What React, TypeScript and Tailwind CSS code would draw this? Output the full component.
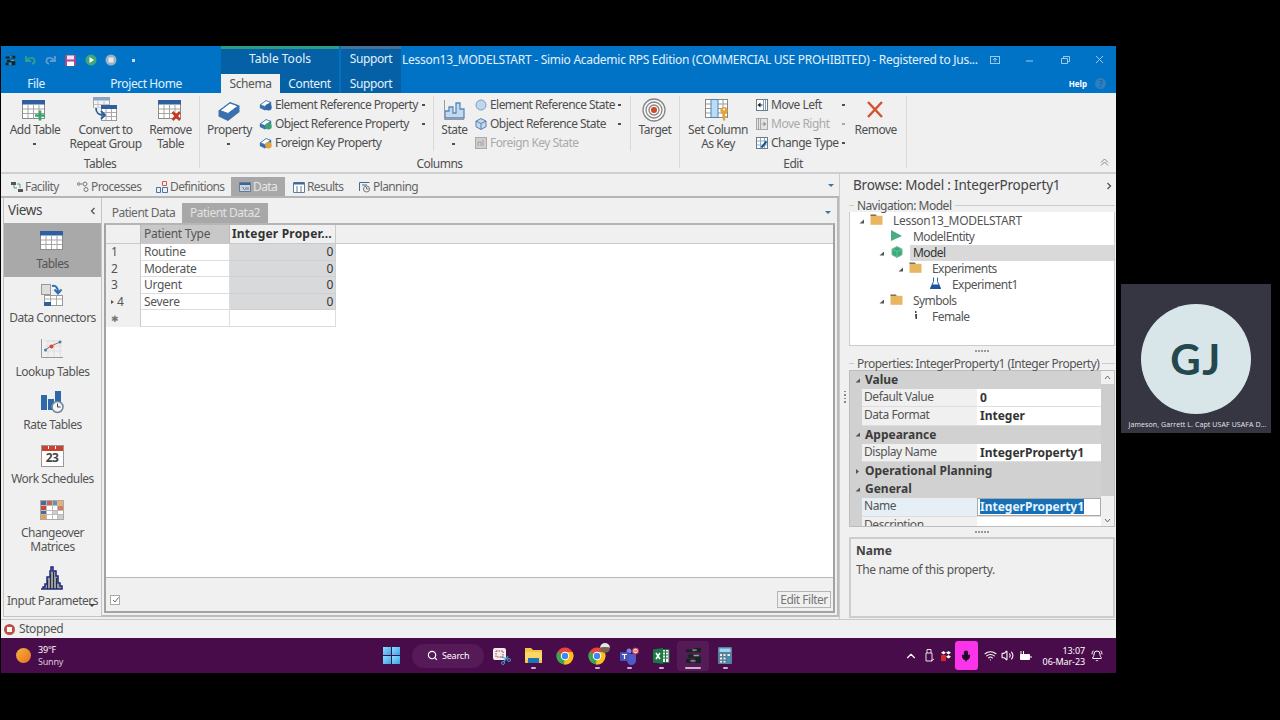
import type { ReactNode } from 'react';
import clsx from 'clsx';
import { Search, Wifi, Volume2, ChevronUp, Mic, BellRing } from 'lucide-react';

/* ---------- icons ---------- */

type GridIconProps = { badge?: 'plus' | 'cross' | 'none' };

function TableIcon({ badge = 'none' }: GridIconProps) {
  return (
    <svg width="24" height="22" viewBox="0 0 24 22">
      <rect x="0.5" y="1.5" width="22" height="18" fill="#fff" stroke="#8b8b8b" />
      <rect x="0" y="1" width="23" height="4.5" fill="#2f5f9e" />
      <path d="M6 6v13M11.5 6v13M17 6v13M1 10h21M1 14.5h21" stroke="#a5a5a5" fill="none" />
      {badge === 'plus' && <path d="M18 11.5v10M13 16.5h10" stroke="#35a66b" strokeWidth="2.6" />}
      {badge === 'cross' && <path d="M14.5 13l7.5 8M22 13l-7.5 8" stroke="#c8391f" strokeWidth="2.6" />}
    </svg>
  );
}

function ConvertIcon() {
  return (
    <svg width="26" height="25" viewBox="0 0 26 25">
      <rect x="1.5" y="0.5" width="16" height="14" fill="#f4f4f4" stroke="#aaa" />
      <rect x="1" y="0" width="17" height="3.5" fill="#8ba4c6" />
      <path d="M6 4v10M12 4v10M2 7.5h15M2 11h15" stroke="#c0c0c0" />
      <rect x="9.5" y="8.5" width="15" height="15" fill="#fff" stroke="#999" />
      <rect x="9" y="8" width="16" height="4" fill="#2f5f9e" />
      <path d="M14 12v11M19.5 12v11M10 15.5h14M10 19.5h14" stroke="#aaa" />
      <path d="M1 11h8v13H1z" fill="#f0f0f0" />
      <path d="M4 11c0 5 2 7 8 7M9 14l4 4-4 4" stroke="#2f5f9e" strokeWidth="1.8" fill="none" />
    </svg>
  );
}

function PropertyIcon({ size = 24, badge }: { size?: number; badge?: string }) {
  return (
    <svg width={size} height={size} viewBox="0 0 24 24" className="shrink-0">
      <path d="M1.5 12.500L13 4l9.500 3.500v6.500L11 23l-9.500-4.500z" fill="#3a70ad" />
      <path d="M3 12.500L13 5l8 3-10 7.500z" fill="#fff" stroke="#3a70ad" />
      {badge && <circle cx="17.5" cy="17" r="6" fill={badge} />}
    </svg>
  );
}

function StateIcon() {
  return (
    <svg width="22" height="22" viewBox="0 0 22 22">
      <path d="M2 19V12h4V8h4v6h3V4h4v6h4v9z" fill="#c3d9ee" stroke="#5a88b8" strokeWidth="1.3" />
      <path d="M1.500 1v19.500H21" stroke="#999" fill="none" />
    </svg>
  );
}

function TargetIcon() {
  return (
    <svg width="24" height="24" viewBox="0 0 24 24" fill="none" stroke="#858585" strokeWidth="1.3">
      <circle cx="12" cy="12" r="11" fill="#fafafa" />
      <circle cx="12" cy="12" r="8" />
      <circle cx="12" cy="12" r="5" />
      <circle cx="12" cy="12" r="2.400" fill="#d04a2c" stroke="#d04a2c" />
    </svg>
  );
}

function KeyColumnIcon() {
  return (
    <svg width="24" height="23" viewBox="0 0 24 23">
      <rect x="0.5" y="1.5" width="22" height="18" fill="#fff" stroke="#888" />
      <path d="M1 6h21M1 10.500h21M1 15h21M18 2v17" stroke="#999" />
      <rect x="6" y="1.5" width="7" height="18" fill="#bcdcf3" stroke="#4b87b9" />
      <circle cx="19" cy="12.500" r="3.600" fill="#e0a43a" />
      <circle cx="19" cy="11.500" r="1" fill="#fff" />
      <path d="M19 15v7.500M19 19h3" stroke="#e0a43a" strokeWidth="2.200" />
    </svg>
  );
}

function CrossIcon() {
  return (
    <svg width="18" height="18" viewBox="0 0 18 18">
      <path d="M2 1l14 15M16 1L2 16" stroke="#d4532f" strokeWidth="2.500" />
    </svg>
  );
}

function ColumnIcon({ kind }: { kind: 'left' | 'right' | 'type' }) {
  const ink = kind === 'right' ? '#a8a8a8' : '#6b7b88';
  return (
    <svg width="12" height="12" viewBox="0 0 12 12" fill="none" stroke={ink} className="shrink-0">
      <rect x="0.5" y="0.5" width="11" height="11" fill={kind === 'right' ? '#e4e4e4' : '#fff'} />
      {kind === 'left' && (
        <>
          <path d="M7.500 1v10M9.500 1v10" stroke="#7d9cb8" />
          <path d="M1.500 6L4.500 3.500v5z" fill="#222" stroke="none" />
          <path d="M4 6h2.500" stroke="#222" />
        </>
      )}
      {kind === 'right' && (
        <>
          <path d="M2.500 1v10M4.500 1v10M5.500 6h2" />
          <path d="M10.500 6L7.500 3.500v5z" fill="#999" stroke="none" />
        </>
      )}
      {kind === 'type' && (
        <>
          <path d="M4.500 1v10M8.500 1v10M1 4h10M1 8h10" stroke="#7fb0d4" />
          <path d="M5.500 10.500l5-6" stroke="#234f80" strokeWidth="2" />
        </>
      )}
    </svg>
  );
}

function CircleStateIcon() {
  return (
    <svg width="12" height="12" viewBox="0 0 12 12" className="shrink-0">
      <circle cx="6" cy="6" r="5" fill="#bdd7ee" stroke="#7f9dbd" />
    </svg>
  );
}

function CubeIcon({ fill, stroke }: { fill: string; stroke: string }) {
  return (
    <svg width="12" height="12" viewBox="0 0 12 12" fill={fill} stroke={stroke} className="shrink-0">
      <path d="M6 .6l5 2.400v5.800L6 11.400 1 8.800V3z" />
      <path d="M1 3l5 2.500L11 3M6 5.500v6" fill="none" />
    </svg>
  );
}

function DisabledKeyIcon() {
  return (
    <svg width="12" height="12" viewBox="0 0 12 12" className="shrink-0">
      <rect x="0.5" y="0.5" width="11" height="11" fill="#cfcfcf" stroke="#aaa" />
      <path d="M3 9V5h3v4M8 3v6" stroke="#a0a0a0" fill="none" />
    </svg>
  );
}

function ConnectorIcon() {
  return (
    <svg width="24" height="24" viewBox="0 0 24 24">
      <rect x="1.5" y="1.5" width="9" height="10" fill="#ddd" stroke="#999" />
      <rect x="4.5" y="12.5" width="18" height="10" fill="#fff" stroke="#999" />
      <path d="M10.500 13v9M16.500 13v9M5 16h17" stroke="#aaa" />
      <rect x="4" y="19" width="7" height="4" fill="#2f5f9e" />
      <path d="M12 3c4-1 6 2 6 6M14.500 6.500l3.500 4 3.500-4" stroke="#2f6fae" strokeWidth="2" fill="none" />
    </svg>
  );
}

function LookupIcon() {
  return (
    <svg width="24" height="22" viewBox="0 0 24 22">
      <path d="M5 3h17M5 8h17M5 13h17M8 2v17M14 2v17M20 2v17" stroke="#ddd" />
      <path d="M1.500 1v18.500H23" stroke="#999" fill="none" />
      <path d="M5 12l6-4 9-4" stroke="#c55" fill="none" />
      <circle cx="5.500" cy="12" r="1.500" fill="#3a82a8" />
      <circle cx="11.500" cy="8.500" r="2" fill="#cf4a34" />
      <circle cx="20" cy="4" r="1.500" fill="#3a82a8" />
    </svg>
  );
}

function RateIcon() {
  return (
    <svg width="24" height="24" viewBox="0 0 24 24">
      <path d="M1 5h6v15H1zM8 9h6v11H8zM15 1h6v14h-6z" fill="#2f68a8" />
      <circle cx="17.500" cy="17" r="5.500" fill="#f4f4f4" stroke="#708495" strokeWidth="1.500" />
      <path d="M17.500 13.500V17h3" stroke="#345" fill="none" />
    </svg>
  );
}

function CalendarIcon() {
  return (
    <div className="flex h-[22px] w-[23px] flex-col border border-[#999] bg-white">
      <div className="flex h-[5px] shrink-0 justify-around bg-[#c9422f] px-1">
        <span className="h-[3px] w-px bg-white" />
        <span className="h-[3px] w-px bg-white" />
      </div>
      <div className="text-center text-[12px] leading-[14px] font-bold text-[#444]">23</div>
    </div>
  );
}

const MATRIX = [
  ['#4a6a98', '#c9654a', '#6d8fb5', '#e8b06a'],
  ['#c94a3a', '#ffffff', '#ffffff', '#d8785a'],
  ['#4a6a98', '#ffffff', '#cccccc', '#ffffff'],
  ['#e8a050', '#ffffff', '#ffffff', '#cccccc'],
];

function MatrixIcon() {
  return (
    <div className="grid h-[20px] w-[24px] grid-cols-4 gap-px border border-[#aaa] bg-[#bbb]">
      {MATRIX.flat().map((color, i) => (
        <span key={i} style={{ backgroundColor: color }} />
      ))}
    </div>
  );
}

function HistogramIcon() {
  return (
    <svg width="24" height="24" viewBox="0 0 24 24">
      <path
        d="M1 23h2v-2h2v-3h2v-7h3V5h1V1h2v4h3v5h2v7h2v3h2v3z"
        fill="#9a9c98"
        stroke="#1c2a7c"
        strokeWidth="1.500"
      />
      <path d="M7.500 14v9M10.500 8v15M13.500 6v17M16.500 12v11" stroke="#222b55" />
    </svg>
  );
}

function FolderIcon() {
  return (
    <svg width="13" height="11" viewBox="0 0 13 11">
      <path d="M.5 2V.5h5L7 2z" fill="#6f6040" />
      <rect x="0.5" y="1.8" width="12" height="9" fill="#e8b660" />
    </svg>
  );
}

function FlaskIcon() {
  return (
    <svg width="13" height="13" viewBox="0 0 13 13">
      <path d="M4.500 .5v4L1.500 11.500h10L8.500 4.500v-4" stroke="#2862a2" fill="none" />
      <path d="M3 7.500h7l2 4.500H1z" fill="#1d559a" />
    </svg>
  );
}

/* ---------- title bar ---------- */

function SimioMark({ className }: { className?: string }) {
  return (
    <svg className={className} viewBox="0 0 16 16">
      <path d="M1 2h6v3H1zM9 1h6v4H9zM3 7h6v3H3zM9 9h6v6H9zM1 11h5v4H1z" fill="#15241f" />
      <path d="M7 3h4M8 8h5M5 13h5" stroke="#7fae8f" strokeWidth="1.200" />
    </svg>
  );
}

function QuickAccess() {
  return (
    <div className="flex h-[28px] items-center pl-[4px]">
      <SimioMark className="mr-[8px] h-[11px] w-[11px]" />
      <svg className="mr-[7px]" width="13" height="12" viewBox="0 0 13 12" fill="none" stroke="#31a08e" strokeWidth="1.800">
        <path d="M2 2v5h5M2.500 6.500C5 3 10 3 10.500 6c.4 2-1 3.500-2.500 4" />
      </svg>
      <svg className="mr-[8px]" width="13" height="12" viewBox="0 0 13 12" fill="none" stroke="#5f9ccb" strokeWidth="1.800">
        <path d="M11 2v5H6M10.500 6.500C8 3 3 3 2.500 6c-.4 2 1 3.500 2.500 4" />
      </svg>
      <svg className="mr-[9px]" width="11" height="11" viewBox="0 0 11 11">
        <rect width="11" height="11" fill="#a24a94" />
        <rect x="2" y="0.5" width="7" height="4" fill="#f3e4f2" />
        <rect x="2" y="6.5" width="7" height="4.5" fill="#fff" />
      </svg>
      <svg className="mr-[8px]" width="12" height="12" viewBox="0 0 12 12">
        <circle cx="6" cy="6" r="5.500" fill="#3fa878" />
        <path d="M4.500 3l4.500 3-4.500 3z" fill="#fff" />
      </svg>
      <svg className="mr-[15px]" width="12" height="12" viewBox="0 0 12 12">
        <circle cx="6" cy="6" r="5.500" fill="#9fb0c0" />
        <rect x="3.5" y="3.5" width="5" height="5" fill="#e4e9ee" />
      </svg>
      <span className="h-[3px] w-[3px] bg-[#bfe0f8]" />
    </div>
  );
}

function TitleBar() {
  return (
    <header className="flex h-[47px] bg-[#0173c7] text-[12px] tracking-[-0.4px] text-[#e3f1fb]">
      <div className="w-[220px]">
        <QuickAccess />
        <div className="flex h-[19px] items-center whitespace-nowrap">
          <span className="w-[70px] text-center">File</span>
          <span className="w-[150px] text-center">Project Home</span>
        </div>
      </div>
      <div className="w-[118px] border-t-[3px] border-[#2c9c83] bg-[#0560a6]">
        <div className="flex h-[25px] items-center justify-center pb-[5px] tracking-normal">Table Tools</div>
        <div className="flex h-[19px] items-center text-center">
          <span className="h-[19px] w-[59px] bg-[#f0f0f0] leading-[20px] text-[#555]">Schema</span>
          <span className="w-[59px]">Content</span>
        </div>
      </div>
      <div className="ml-[2px] w-[60px] border-t-[3px] border-[#44729c] bg-[#0560a6] text-center">
        <div className="flex h-[25px] items-center justify-center pb-[5px]">Support</div>
        <div className="h-[19px] leading-[20px]">Support</div>
      </div>
      <div className="flex-1">
        <div className="flex h-[28px] items-center pl-[1px]">
          <span className="w-[586px] shrink-0 tracking-[-0.27px] whitespace-nowrap">
            Lesson13_MODELSTART - Simio Academic RPS Edition (COMMERCIAL USE PROHIBITED) - Registered to Jus...
          </span>
          <svg width="118" height="12" viewBox="0 0 118 12" fill="none" stroke="#9dcaec">
            <rect x="2.5" y="2.5" width="9" height="7" />
            <path d="M7 8V4.500M5 6l2-2 2 2M38 7h7" />
            <path d="M73.500 4.500h6v5h-6zM75.500 4V2.500h6v5H80M108 2l7 7M115 2l-7 7" />
          </svg>
        </div>
        <div className="flex h-[19px] items-center justify-end gap-[8px] pr-[10px]">
          <span className="text-[8px] font-bold tracking-normal text-white">Help</span>
          <span className="flex h-[11px] w-[11px] items-center justify-center rounded-full bg-[#2c80bd] text-[8px] leading-none text-[#0b5c9f]">
            ?
          </span>
        </div>
      </div>
    </header>
  );
}

/* ---------- ribbon ---------- */

function Caret({ className }: { className?: string }) {
  return <span className={clsx('inline-block h-[2px] w-[3px] shrink-0 bg-current', className)} />;
}

type BigButtonProps = { icon: ReactNode; lines: string[]; className: string; menu?: boolean };

function BigButton({ icon, lines, className, menu }: BigButtonProps) {
  return (
    <div className={clsx('flex shrink-0 flex-col items-center pt-[3px]', className)}>
      <div className="flex h-[27px] items-center pr-[2px]">{icon}</div>
      {lines.map((line) => (
        <span key={line} className="leading-[14px] whitespace-nowrap">
          {line}
        </span>
      ))}
      {menu ? <Caret className="mt-[6px] mr-[2px]" /> : null}
    </div>
  );
}

type SmallButtonProps = { icon: ReactNode; label: string; menu?: boolean; disabled?: boolean };

function SmallButton({ icon, label, menu, disabled }: SmallButtonProps) {
  return (
    <div className={clsx('flex h-[19px] items-center gap-[3px]', disabled && 'text-[#aaa]')}>
      {icon}
      <span className="min-w-0 flex-1 whitespace-nowrap">{label}</span>
      {menu ? <Caret /> : null}
    </div>
  );
}

function Separator({ className }: { className: string }) {
  return <div className={clsx('w-px shrink-0 bg-[#dadada]', className)} />;
}

function Ribbon() {
  return (
    <div className="flex h-[81px] border-b-2 border-[#cfcfcf] bg-[#f0f0f0] text-[12px] tracking-[-0.5px] text-[#4f4f4f]">
      <section className="w-[198px]">
        <div className="flex h-[63px]">
          <BigButton className="w-[68px]" icon={<TableIcon badge="plus" />} lines={['Add Table']} menu />
          <BigButton className="w-[73px]" icon={<ConvertIcon />} lines={['Convert to', 'Repeat Group']} />
          <BigButton className="w-[57px]" icon={<TableIcon badge="cross" />} lines={['Remove', 'Table']} />
        </div>
        <div className="text-center leading-[15px]">Tables</div>
      </section>
      <Separator className="mt-[3px] h-[72px]" />

      <section className="w-[479px]">
        <div className="flex h-[63px]">
          <BigButton className="w-[59px]" icon={<PropertyIcon />} lines={['Property']} menu />
          <div className="w-[166px] pt-[2px] tracking-[-0.58px]">
            <SmallButton icon={<PropertyIcon size={13} badge="#2f68a8" />} label="Element Reference Property" menu />
            <SmallButton icon={<PropertyIcon size={13} badge="#3aa270" />} label="Object Reference Property" menu />
            <SmallButton icon={<PropertyIcon size={13} badge="#e0a43a" />} label="Foreign Key Property" />
          </div>
          <Separator className="mt-[3px] ml-[8px] h-[55px]" />
          <BigButton className="w-[41px]" icon={<StateIcon />} lines={['State']} menu />
          <div className="w-[146px] pt-[2px] tracking-[-0.56px]">
            <SmallButton icon={<CircleStateIcon />} label="Element Reference State" menu />
            <SmallButton icon={<CubeIcon fill="#c3d9ee" stroke="#5a7fae" />} label="Object Reference State" menu />
            <SmallButton icon={<DisabledKeyIcon />} label="Foreign Key State" disabled />
          </div>
          <Separator className="mt-[3px] ml-[9px] h-[55px]" />
          <BigButton className="w-[48px]" icon={<TargetIcon />} lines={['Target']} />
        </div>
        <div className="text-center leading-[15px]">Columns</div>
      </section>
      <Separator className="mt-[3px] h-[72px]" />

      <section className="w-[226px]">
        <div className="flex h-[63px]">
          <BigButton className="w-[76px]" icon={<KeyColumnIcon />} lines={['Set Column', 'As Key']} />
          <div className="w-[90px] pt-[2px]">
            <SmallButton icon={<ColumnIcon kind="left" />} label="Move Left" menu />
            <SmallButton icon={<ColumnIcon kind="right" />} label="Move Right" menu disabled />
            <SmallButton icon={<ColumnIcon kind="type" />} label="Change Type" menu />
          </div>
          <BigButton className="w-[62px]" icon={<CrossIcon />} lines={['Remove']} />
        </div>
        <div className="text-center leading-[15px]">Edit</div>
      </section>
      <Separator className="mt-[3px] h-[72px]" />
      <div className="flex flex-1 items-end justify-end pr-[7px] pb-[5px]">
        <svg width="9" height="9" viewBox="0 0 9 9" fill="none" stroke="#888">
          <path d="M1 4.500L4.500 1 8 4.500M1 7.500L4.500 4 8 7.500" />
        </svg>
      </div>
    </div>
  );
}

/* ---------- workspace ---------- */

function TabGlyph({ kind }: { kind: string }) {
  return (
    <svg width="12" height="12" viewBox="0 0 12 12" fill="none" stroke="#777" className="shrink-0">
      {kind === 'facility' && (
        <>
          <path d="M0 1h5v3H0zM7 8h5v3H7z" fill="#555" stroke="none" />
          <path d="M3 4v3h3M6 3h3v4" stroke="#50a080" />
        </>
      )}
      {kind === 'processes' && (
        <>
          <circle cx="1.800" cy="3" r="1.300" />
          <path d="M3.500 3h2" />
          <circle cx="8" cy="3" r="2" />
          <circle cx="9" cy="8.500" r="2" />
        </>
      )}
      {kind === 'definitions' && (
        <>
          <path d="M.5 6.500h4v5h-4z" stroke="#4676a8" />
          <path d="M6.500.5h4v4h-4z" stroke="#d0603f" />
          <path d="M6.500 6.500h5v5h-5z" stroke="#4676a8" />
        </>
      )}
      {kind === 'data' && (
        <>
          <path d="M.5 1.500h11v9H.5z" fill="#ccd3dc" stroke="#5f7ba0" />
          <path d="M1 3h10" stroke="#3c659a" strokeWidth="2" />
          <path d="M3.500 6l2 3M7 6v3M9 6v3" />
        </>
      )}
      {kind === 'results' && (
        <>
          <path d="M.5 1.500h11v10H.5z" fill="#fff" stroke="#5f7ba0" />
          <path d="M1 2.500h10" stroke="#3c659a" strokeWidth="2" />
          <path d="M4 5v6M8 5v6" stroke="#5f7ba0" />
        </>
      )}
      {kind === 'planning' && (
        <>
          <path d="M.5 10V1.500h10M3 4h5" stroke="#3d6f8c" />
          <circle cx="7.500" cy="8" r="3" />
          <path d="M7.500 6v2h2" />
        </>
      )}
    </svg>
  );
}

const WORKSPACE_TABS = [
  { id: 'facility', label: 'Facility', width: 'w-[66px]' },
  { id: 'processes', label: 'Processes', width: 'w-[79px]' },
  { id: 'definitions', label: 'Definitions', width: 'w-[83px]' },
  { id: 'data', label: 'Data', width: 'w-[54px]' },
  { id: 'results', label: 'Results', width: 'w-[66px]' },
  { id: 'planning', label: 'Planning', width: 'w-[68px]' },
];

function DropArrow() {
  return <span className="border-x-[3px] border-t-[3px] border-x-transparent border-t-[#2b7d9c]" />;
}

function WorkspaceTabs() {
  return (
    <div className="flex h-[24px] items-end border-b-2 border-[#b5b5b5] pl-[2px] text-[12px] tracking-[-0.6px] text-[#666]">
      {WORKSPACE_TABS.map(({ id, label, width }) => (
        <div
          key={id}
          className={clsx(
            'flex h-[19px] shrink-0 items-center gap-[2px] pl-[8px] whitespace-nowrap',
            width,
            id === 'data' && 'bg-[#a8a8a8] text-[#e6e6e6]',
          )}
        >
          <TabGlyph kind={id} />
          {label}
        </div>
      ))}
      <div className="flex flex-1 justify-end pr-[5px] pb-[9px]">
        <DropArrow />
      </div>
    </div>
  );
}

const VIEWS = [
  { label: 'Tables', icon: <TableIcon />, height: 'h-[54px]', active: true },
  { label: 'Data Connectors', icon: <ConnectorIcon />, height: 'h-[54px]' },
  { label: 'Lookup Tables', icon: <LookupIcon />, height: 'h-[53px]' },
  { label: 'Rate Tables', icon: <RateIcon />, height: 'h-[54px]' },
  { label: 'Work Schedules', icon: <CalendarIcon />, height: 'h-[54px]' },
  { label: 'Changeover Matrices', icon: <MatrixIcon />, height: 'h-[68px]' },
  { label: 'Input Parameters', icon: <HistogramIcon />, height: 'h-[52px]' },
];

function ViewsPanel() {
  return (
    <aside className="relative w-[99px] shrink-0 border border-t-0 border-[#c4c4c4] text-[12px] tracking-[-0.5px] text-[#555]">
      <div className="flex h-[25px] items-center justify-between pr-[5px] pl-[4px] text-[13.5px] tracking-[-0.4px] text-[#444]">
        Views
        <svg width="6" height="8" viewBox="0 0 6 8" fill="none" stroke="#555" strokeWidth="1.300">
          <path d="M4.500 1L1.500 4l3 3" />
        </svg>
      </div>
      {VIEWS.map(({ label, icon, height, active }) => (
        <div
          key={label}
          className={clsx('flex flex-col items-center px-[1px] pt-[5px] text-center', height, active && 'bg-[#a9a9a9]')}
        >
          <div className="flex h-[26px] items-center pr-[1px]">{icon}</div>
          <span
            className={clsx(
              'mt-[3px] leading-[14px]',
              label === 'Changeover Matrices' ? 'w-[70px]' : 'whitespace-nowrap',
            )}
          >
            {label}
          </span>
        </div>
      ))}
      {/* scroll hint for the views that do not fit */}
      <span className="absolute right-[6px] bottom-[9px] border-x-[3px] border-t-[3px] border-x-transparent border-t-[#444]" />
    </aside>
  );
}

const ROWS = [
  { no: '1', type: 'Routine' },
  { no: '2', type: 'Moderate' },
  { no: '3', type: 'Urgent' },
  { no: '4', type: 'Severe' },
];

function DataTable() {
  return (
    <div className="flex flex-1 flex-col border-2 border-[#a3a3a3] border-t-[#b5b5b5] bg-white text-[12px] tracking-[-0.3px] text-[#555]">
      <div className="flex h-[19px] shrink-0 border-b border-[#c8c8c8] bg-[#f0f0f0] leading-[17px]">
        <span className="w-[35px] border-r border-[#bbb]" />
        <span className="w-[89px] border-r border-[#bbb] bg-[#c8c8c8] pl-[3px]">Patient Type</span>
        <span className="w-[106px] overflow-hidden border-r border-[#ccc] pl-[2px] text-[12px] font-bold tracking-[0.2px] whitespace-nowrap text-[#333]">
          Integer Proper...
        </span>
      </div>
      {ROWS.map(({ no, type }) => (
        <div key={no} className="flex h-[16.6px] shrink-0 leading-[16px]">
          <span className="flex w-[35px] items-center border-r border-[#ccc] bg-[#f0f0f0] pl-[5px]">
            {no === '4' ? (
              <span className="mr-[3px] border-y-[2px] border-l-[3px] border-y-transparent border-l-[#555]" />
            ) : null}
            {no}
          </span>
          <span className="w-[89px] border-r border-b border-[#ddd] pl-[3px]">{type}</span>
          <span className="w-[106px] border-r border-b border-[#cfd0d2] bg-[#d8d9db] pr-[2px] text-right text-[#333]">
            0
          </span>
        </div>
      ))}
      <div className="flex h-[17px] shrink-0">
        <span className="flex w-[35px] items-center border-r border-[#ccc] bg-[#f0f0f0] pl-[5px] text-[9px] leading-none text-[#777]">✱</span>
        <span className="w-[89px] border-r border-b border-[#ddd]" />
        <span className="w-[106px] border-r border-b border-[#ddd]" />
      </div>
      <div className="flex-1" />
      <div className="flex h-[34px] shrink-0 items-center justify-between border-t border-[#b8b8b8] bg-[#f0f0f0] pt-[10px] pr-[2px] pl-[4px]">
        <span className="flex h-[10px] w-[10px] items-center justify-center border border-[#aaa] bg-white">
          <svg width="7" height="6" viewBox="0 0 7 6" fill="none" stroke="#666">
            <path d="M1 3l2 2 3.500-4.500" />
          </svg>
        </span>
        <span className="h-[17px] w-[54px] border border-[#b5b5b5] text-center leading-[15px] tracking-[-0.5px] whitespace-nowrap text-[#777]">
          Edit Filter
        </span>
      </div>
    </div>
  );
}

function Workspace() {
  return (
    <div className="flex w-[839px] flex-col border-r border-[#ccc]">
      <WorkspaceTabs />
      <div className="flex h-[419px] pl-[2px]">
        <ViewsPanel />
        <div className="flex flex-1 flex-col border-r-2 border-b-2 border-[#bbb] pr-[2px] pb-[2px] pl-[2px]">
          <div className="flex h-[25px] shrink-0 items-end justify-between pr-[4px] text-[12px] tracking-[-0.5px] text-[#666]">
            <div className="flex h-[20px] pl-[1px] leading-[20px] whitespace-nowrap">
              <span className="w-[77px] text-center">Patient Data</span>
              <span className="w-[86px] bg-[#a8a8a8] text-center text-[#e2e2e2]">Patient Data2</span>
            </div>
            <div className="mb-[9px] flex">
              <DropArrow />
            </div>
          </div>
          <DataTable />
        </div>
      </div>
    </div>
  );
}

/* ---------- browse panel ---------- */

type TreeNode = { label: string; indent: string; icon: ReactNode; open?: boolean; selected?: boolean };

const TREE: TreeNode[] = [
  { label: 'Lesson13_MODELSTART', indent: 'pl-[9px]', icon: <FolderIcon />, open: true },
  {
    label: 'ModelEntity',
    indent: 'pl-[29px]',
    icon: (
      <svg width="13" height="12" viewBox="0 0 13 12">
        <path d="M1 0l11 6-11 5z" fill="#4bab83" />
      </svg>
    ),
  },
  { label: 'Model', indent: 'pl-[29px]', icon: <CubeIcon fill="#3fa77c" stroke="#6cc09d" />, open: true, selected: true },
  { label: 'Experiments', indent: 'pl-[48px]', icon: <FolderIcon />, open: true },
  { label: 'Experiment1', indent: 'pl-[68px]', icon: <FlaskIcon /> },
  { label: 'Symbols', indent: 'pl-[29px]', icon: <FolderIcon />, open: true },
  {
    label: 'Female',
    indent: 'pl-[48px]',
    icon: (
      <svg width="13" height="12" viewBox="0 0 13 12">
        <path d="M6 1h1.500v2H6zM6 4h2v5H6.500z" fill="#444" />
      </svg>
    ),
  },
];

function Expander({ open }: { open?: boolean }) {
  return (
    <svg width="5" height="5" viewBox="0 0 5 5" className="shrink-0">
      {open ? <path d="M5 .5v4H.5z" fill="#555" /> : null}
    </svg>
  );
}

function Grip() {
  return (
    <div className="flex justify-center gap-[1px]">
      {[0, 1, 2, 3, 4].map((i) => (
        <span key={i} className="h-[2px] w-[2px] bg-[#999]" />
      ))}
    </div>
  );
}

function Legend({ children }: { children: ReactNode }) {
  return (
    <div className="flex h-[13px] items-center gap-[3px] leading-[13px] tracking-[-0.5px] whitespace-nowrap">
      <span className="h-px w-[5px] bg-[#ccc]" />
      {children}
      <span className="h-px flex-1 bg-[#ccc]" />
    </div>
  );
}

function Tree() {
  return (
    <div className="h-[134px] border border-t-0 border-[#ccc] bg-white pt-[1px]">
      {TREE.map(({ label, indent, icon, open, selected }) => (
        <div key={label} className={clsx('flex h-[16px] items-center', indent)}>
          <Expander open={open} />
          <span className="mr-[7px] ml-[6px] flex w-[13px] shrink-0 justify-center pb-[3px]">{icon}</span>
          <span
            className={clsx(
              'h-[16px] flex-1 pl-[3px] leading-[16px]',
              label === 'Lesson13_MODELSTART' ? 'tracking-[-0.3px]' : 'tracking-[-0.55px]',
              selected && 'bg-[#d9d9d9] text-[#333]',
            )}
          >
            {label}
          </span>
        </div>
      ))}
    </div>
  );
}

function Category({ label, open = true }: { label: string; open?: boolean }) {
  return (
    <div className="flex h-[18.2px] items-center pl-[5px] text-[12px] font-bold text-[#3c3c3c]">
      {open ? (
        <Expander open />
      ) : (
        <svg width="5" height="5" viewBox="0 0 5 5">
          <path d="M1 0l3 2.500L1 5z" fill="#555" />
        </svg>
      )}
      <span className="ml-[5px]">{label}</span>
    </div>
  );
}

function Field({ label, value, editing }: { label: string; value: string; editing?: boolean }) {
  return (
    <div className="ml-[12px] flex h-[18.2px] border-b border-[#ddd]">
      <span
        className={clsx('w-[115px] pl-[2px] leading-[16px] tracking-[-0.45px]', editing ? 'bg-[#e6eff5]' : 'bg-[#f0f0f0]')}
      >
        {label}
      </span>
      <span
        className={clsx(
          'flex flex-1 items-center bg-white pl-[3px] text-[12px] leading-[15px] font-bold text-[#333]',
          editing && 'border border-[#aaa]',
        )}
      >
        <span className={clsx(editing && '-ml-px bg-[#1670b8] text-[#e8f3fb]')}>{value}</span>
      </span>
    </div>
  );
}

function PropertyGrid() {
  return (
    <div className="flex h-[157px] overflow-hidden border border-[#bdbdbd] bg-[#d1d1d1]">
      <div className="w-[251px]">
        <Category label="Value" />
        <Field label="Default Value" value="0" />
        <Field label="Data Format" value="Integer" />
        <Category label="Appearance" />
        <Field label="Display Name" value="IntegerProperty1" />
        <Category label="Operational Planning" open={false} />
        <Category label="General" />
        <Field label="Name" value="IntegerProperty1" editing />
        <Field label="Description" value="" />
      </div>
      <div className="flex flex-1 flex-col">
        <span className="flex h-[13px] shrink-0 items-center justify-center bg-[#f0f0f0]">
          <svg width="7" height="5" viewBox="0 0 7 5" fill="none" stroke="#666">
            <path d="M1 4l2.500-3L6 4" />
          </svg>
        </span>
        <span className="h-[112px] shrink-0 bg-[#cdcdcd]" />
        <span className="flex flex-1 items-center justify-center bg-[#f0f0f0] pt-[18px]">
          <svg width="7" height="5" viewBox="0 0 7 5" fill="none" stroke="#666">
            <path d="M1 1l2.500 3L6 1" />
          </svg>
        </span>
      </div>
    </div>
  );
}

function BrowsePanel() {
  return (
    <div className="flex flex-1 text-[12px] text-[#555]">
      <div className="flex w-[9px] flex-col justify-center gap-[2px] pl-[4px]">
        {[0, 1, 2, 3].map((i) => (
          <span key={i} className="h-[1.5px] w-[2px] bg-[#888]" />
        ))}
      </div>
      <div className="w-[266px]">
        <div className="flex h-[25px] items-center justify-between pr-[3px] pb-[2px] pl-[4px] text-[13.5px] tracking-[-0.2px] text-[#444]">
          Browse: Model : IntegerProperty1
          <svg width="6" height="8" viewBox="0 0 6 8" fill="none" stroke="#555" strokeWidth="1.300">
            <path d="M1.500 1l3 3-3 3" />
          </svg>
        </div>
        <Legend>Navigation: Model</Legend>
        <Tree />
        <div className="h-[11px] pt-[4px]">
          <Grip />
        </div>
        <Legend>Properties: IntegerProperty1 (Integer Property)</Legend>
        <PropertyGrid />
        <div className="h-[10px] pt-[4px]">
          <Grip />
        </div>
        <div className="h-[81px] border-2 border-[#cdcdcd] pt-[3px] pl-[5px]">
          <div className="text-[12px] leading-[17px] font-bold text-[#444]">Name</div>
          <div className="mt-[3px] leading-[16px] tracking-[-0.4px]">The name of this property.</div>
        </div>
      </div>
    </div>
  );
}

/* ---------- taskbar ---------- */

function ChromeIcon() {
  return (
    <svg width="18" height="18" viewBox="0 0 18 18">
      <circle cx="9" cy="9" r="8.500" fill="#e8453c" />
      <path d="M9 9L1.600 4.800A8.500 8.500 0 0 0 9 17.500z" fill="#34a853" />
      <path d="M9 9h8.500A8.500 8.500 0 0 1 8 17.500z" fill="#fbc116" />
      <path d="M9 9V5h7.500a8.500 8.500 0 0 1 1 4z" fill="#fbc116" />
      <circle cx="9" cy="9" r="4.200" fill="#fff" />
      <circle cx="9" cy="9" r="3.200" fill="#4285f4" />
    </svg>
  );
}

function SnipIcon() {
  return (
    <svg width="19" height="18" viewBox="0 0 19 18">
      <rect x="1" y="1" width="13" height="12" rx="2" fill="#f2ecef" />
      <rect x="4" y="4" width="7" height="6" fill="none" stroke="#b43a3a" strokeDasharray="1.500 1" />
      <path d="M9 10l7 2M12 15l4-6" stroke="#3f9bd0" strokeWidth="1.300" />
      <circle cx="11" cy="16" r="1.500" fill="none" stroke="#3f9bd0" />
      <circle cx="17" cy="13" r="1.500" fill="none" stroke="#3f9bd0" />
    </svg>
  );
}

function ExplorerIcon() {
  return (
    <svg width="19" height="17" viewBox="0 0 19 17">
      <path d="M1 1h6l2 2h9v13H1z" fill="#f6c444" />
      <path d="M1 5h17v8H1z" fill="#fbd768" />
      <path d="M4 11h11v5H4z" fill="#1d74b8" />
    </svg>
  );
}

function TeamsIcon() {
  return (
    <svg width="20" height="18" viewBox="0 0 20 18">
      <circle cx="10" cy="4" r="2.500" fill="#7b83eb" />
      <path d="M7 7h10v6a4.500 4.500 0 0 1-9 1z" fill="#5059c9" />
      <rect x="1" y="5" width="9" height="9" rx="1" fill="#4653b8" />
      <path d="M3 7.500h5M5.500 7.500V12" stroke="#fff" strokeWidth="1.200" />
      <circle cx="16.500" cy="4" r="3" fill="#f1d7dc" stroke="#c4314b" strokeWidth="1.200" />
      <path d="M15 4h3" stroke="#c4314b" />
    </svg>
  );
}

function ExcelIcon() {
  return (
    <svg width="17" height="16" viewBox="0 0 17 16">
      <rect x="8" y="1.5" width="8" height="13" fill="#eef5f0" stroke="#1e7145" />
      <path d="M10 4h5M10 7h5M10 10h5M12.500 2v12" stroke="#1e7145" />
      <path d="M0 1.500L10 0v16L0 14.500z" fill="#1b7a43" />
      <path d="M3 5l4 6M7 5l-4 6" stroke="#fff" strokeWidth="1.500" />
    </svg>
  );
}

function CalculatorIcon() {
  return (
    <svg width="14" height="17" viewBox="0 0 14 17">
      <rect width="14" height="17" rx="1" fill="#5a7f96" />
      <rect x="1.5" y="1.5" width="11" height="3.5" fill="#9ad7f3" />
      <path d="M2 7h2v2H2zM5.500 7h2v2h-2zM2 10.500h2v2H2zM5.500 10.500h2v2h-2zM2 14h2v1.500H2zM5.500 14h2v1.500h-2zM9.500 7h2.500v2H9.500z" fill="#e4eef4" />
      <path d="M9.500 10.500h2.500v5H9.500z" fill="#2f97d4" />
    </svg>
  );
}

const APPS = [
  { id: 'snip', icon: <SnipIcon />, running: false },
  { id: 'explorer', icon: <ExplorerIcon />, running: true },
  { id: 'chrome', icon: <ChromeIcon />, running: false },
  { id: 'chrome-profile', icon: <ChromeIcon />, running: true },
  { id: 'teams', icon: <TeamsIcon />, running: true },
  { id: 'excel', icon: <ExcelIcon />, running: true },
  { id: 'simio', icon: <SimioMark className="h-[17px] w-[17px]" />, running: true },
  { id: 'calc', icon: <CalculatorIcon />, running: true },
];

function Taskbar() {
  return (
    <footer className="flex h-[35px] items-center bg-[#490c4b] text-[9px] text-white">
      <div className="flex w-[382px] items-center gap-[7px] pl-[15px]">
        <span className="h-[15px] w-[15px] rounded-full bg-linear-to-br from-[#f7b23c] to-[#e5701e]" />
        <div className="leading-[11.5px] tracking-[-0.2px]">
          <div>39°F</div>
          <div className="text-[#d9c8da]">Sunny</div>
        </div>
      </div>
      <div className="grid h-[17px] w-[17px] grid-cols-2 gap-px">
        {[0, 1, 2, 3].map((i) => (
          <span key={i} className="bg-linear-to-br from-[#8fdcfb] to-[#2ba6e8]" />
        ))}
      </div>
      <div className="ml-[12px] flex h-[24px] w-[72px] items-center gap-[4px] rounded-full bg-[#561a58] pl-[15px] tracking-[-0.2px]">
        <Search size={11} strokeWidth={2.5} />
        Search
      </div>
      <div className="ml-px flex">
        {APPS.map(({ id, icon, running }) => (
          <div
            key={id}
            className={clsx(
              'relative flex h-[30px] w-[32px] items-center justify-center rounded',
              id === 'simio' && 'bg-[#541b57]',
            )}
          >
            {icon}
            {id === 'chrome-profile' ? (
              <span className="absolute top-[2px] right-[3px] h-[10px] w-[10px] rounded-full border-t-[4px] border-[#e8e4e0] bg-[#76604f]" />
            ) : null}
            {running ? (
              <span
                className={clsx(
                  'absolute bottom-[2px] h-[2px] rounded-full bg-[#c9b3ca]',
                  id === 'simio' ? 'w-[16px]' : 'w-[5px]',
                )}
              />
            ) : null}
          </div>
        ))}
      </div>
      <div className="flex flex-1 items-center justify-end pr-[13px]">
        <ChevronUp size={14} className="mr-[6px]" />
        <svg className="mr-[6px]" width="10" height="13" viewBox="0 0 10 13" fill="none" stroke="#e8dce8">
          <path d="M3 4V.5h4V4M2 4h6v8H2zM7 12l3-2" />
        </svg>
        <svg className="mr-[3px]" width="12" height="12" viewBox="0 0 12 12">
          <path d="M3.500 1L6 2.800 3.500 4.500 1 2.800zM8.500 1L11 2.800 8.500 4.500 6 2.800zM8.500 5L11 6.800 8.500 8.500 6 6.800z" fill="#fff" />
          <rect x="1" y="5" width="5" height="6" fill="#d8242c" />
        </svg>
        <span className="mr-[6px] flex h-[29px] w-[23px] items-center justify-center rounded-[3px] bg-[#fb34ec] text-[#26062a]">
          <Mic size={12} strokeWidth={2.5} fill="currentColor" />
        </span>
        <Wifi size={13} className="mr-[4px]" />
        <Volume2 size={13} className="mr-[5px]" />
        <svg className="mr-[11px]" width="13" height="10" viewBox="0 0 13 10">
          <rect x="1" y="3" width="10" height="6" rx="1" fill="#fff" />
          <path d="M12 5v2M2 0v4M4.500 0v4" stroke="#fff" />
        </svg>
        <div className="mr-[6px] text-right leading-[11px] tracking-[-0.1px] whitespace-nowrap">
          <div>13:07</div>
          <div>06-Mar-23</div>
        </div>
        <BellRing size={12} />
      </div>
    </footer>
  );
}

function ParticipantTile() {
  return (
    <div className="mt-[238px] ml-[5px] flex h-[149px] w-[150px] flex-col items-center bg-[#353642] pt-[20px] font-['Open_Sans','Noto_Sans',sans-serif]">
      <div className="flex h-[110px] w-[110px] shrink-0 items-center justify-center rounded-full bg-[#d8e6ea] font-['Lato',sans-serif] text-[42px] font-bold tracking-[1.5px] text-[#24484d]">
        GJ
      </div>
      <div className="mt-[6px] ml-[3px] text-[7px] leading-[10px] tracking-[0.1px] whitespace-nowrap text-[#e8e8ec]">
        Jameson, Garrett L. Capt USAF USAFA D...
      </div>
    </div>
  );
}

export default function App() {
  return (
    <div className="flex h-[720px] w-[1280px] overflow-hidden bg-black pt-[46px] font-['Noto_Sans','DejaVu_Sans',sans-serif]">
      <div className="ml-px flex h-[627px] w-[1115px] flex-col bg-[#f0f0f0]">
        <TitleBar />
        <Ribbon />
        <div className="flex h-[445px]">
          <Workspace />
          <BrowsePanel />
        </div>
        <div className="flex h-[19px] items-center gap-[4px] border-t border-[#c8c8c8] pl-[3px] text-[12px] tracking-[-0.4px] text-[#555]">
          <span className="flex h-[11px] w-[11px] items-center justify-center rounded-full bg-[#c24b42]">
            <span className="h-[5px] w-[5px] bg-white" />
          </span>
          Stopped
        </div>
        <Taskbar />
      </div>
      <ParticipantTile />
    </div>
  );
}
